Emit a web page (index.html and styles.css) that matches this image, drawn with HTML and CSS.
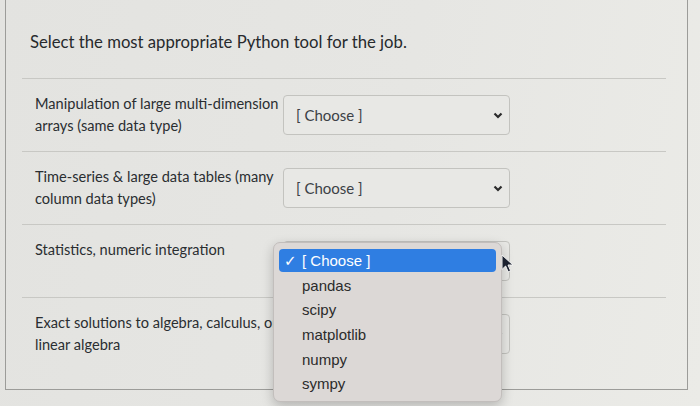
FILE: index.html
```html
<!DOCTYPE html>
<html>
<head>
    <link rel="stylesheet" href="styles.css">
</head>
<body>
<div class="quiz">
    <p class="question">Select the most appropriate Python tool for the job.</p>
    <div class="answers">
        <div class="row">
            <div class="label">Manipulation of large multi-dimension arrays (same data type)</div>
            <div class="select">
                <span>[ Choose ]</span>
                <svg class="chevron" width="10" height="7" viewBox="0 0 10 7"><path d="M1.5 1.5 L5 5 L8.5 1.5" fill="none" stroke="#2b2b2b" stroke-width="2.2"/></svg>
            </div>
        </div>
        <div class="row">
            <div class="label">Time-series &amp; large data tables (many column data types)</div>
            <div class="select">
                <span>[ Choose ]</span>
                <svg class="chevron" width="10" height="7" viewBox="0 0 10 7"><path d="M1.5 1.5 L5 5 L8.5 1.5" fill="none" stroke="#2b2b2b" stroke-width="2.2"/></svg>
            </div>
        </div>
        <div class="row">
            <div class="label">Statistics, numeric integration</div>
            <div class="select open">
                <span class="value">[ Choose ]</span>
                <svg class="chevron" width="10" height="7" viewBox="0 0 10 7"><path d="M1.5 1.5 L5 5 L8.5 1.5" fill="none" stroke="#2b2b2b" stroke-width="2.2"/></svg>
                <ul class="menu">
                    <li class="item current"><span class="check">&#10003;</span>[ Choose ]</li>
                    <li class="item">pandas</li>
                    <li class="item">scipy</li>
                    <li class="item">matplotlib</li>
                    <li class="item">numpy</li>
                    <li class="item">sympy</li>
                </ul>
            </div>
        </div>
        <div class="row">
            <div class="label">Exact solutions to algebra, calculus, or linear algebra</div>
            <div class="select under">
                <span class="value">[ Choose ]</span>
                <svg class="chevron" width="10" height="7" viewBox="0 0 10 7"><path d="M1.5 1.5 L5 5 L8.5 1.5" fill="none" stroke="#2b2b2b" stroke-width="2.2"/></svg>
            </div>
        </div>
    </div>
</div>
<!-- mouse pointer over the open select -->
<svg class="cursor" width="14" height="20" viewBox="0 0 14 20">
    <path d="M1 1 L1 15.5 L4.6 12 L7.2 17.8 L9.6 16.8 L7 11 L12 11 Z" fill="#1c2230" stroke="#f2f2f2" stroke-width="1"/>
</svg>
</body>
</html>
```

FILE: styles.css
```css
body {
    margin: 0;
    background: linear-gradient(100deg, #e3e3e0 0%, #e6e6e3 55%, #ebebe7 100%);
    font-family: Lato, "Open Sans", sans-serif;
    color: #2f3336;
    height: 406px;
    overflow: hidden;
}
.quiz {
    margin-left: 5px;
    width: 683px;
    box-sizing: border-box;
    border: 1px solid #9c9c99;
    border-top: none;
    padding-bottom: 19px;
}
.question {
    margin: 0;
    padding: 30px 0 0 24px;
    font-size: 16.7px;
    line-height: 24px;
    color: #272a2d;
}
.answers {
    margin: 24px 21px 0 16px;
}
.row {
    display: flex;
    align-items: flex-start;
    border-top: 1px solid #c8c8c4;
    padding: 16px 0 16px 13px;
}
.label {
    width: 248px;
    margin: -2px 0 -2px;
    font-size: 14.6px;
    line-height: 22px;
    color: #2a2e31;
}
.select {
    position: relative;
    width: 227px;
    height: 40px;
    box-sizing: border-box;
    border: 1px solid #c3c3bf;
    border-radius: 4px;
    background: #e8e8e5;
    display: flex;
    align-items: center;
    justify-content: space-between;
    padding: 0 6px 0 12px;
    font-size: 15px;
    color: #3c4146;
}
/* value text that sits under the open menu */
.open .value,
.under .value {
    visibility: hidden;
}
.chevron {
    display: block;
}
.menu {
    position: absolute;
    left: -11px;
    top: 0;
    width: 229px;
    box-sizing: border-box;
    margin: 0;
    padding: 6px 5px 4px;
    list-style: none;
    background: #dcd8d6;
    border: 1px solid #c2bebc;
    border-radius: 7px;
    box-shadow: 0 4px 12px rgba(0, 0, 0, 0.22);
    font-family: "Liberation Sans", Arial, sans-serif;
    font-size: 15px;
    z-index: 2;
}
.item {
    height: 24.7px;
    line-height: 24.7px;
    padding-left: 23px;
    color: #2b2b2b;
}
.item.current {
    height: 23px;
    line-height: 23px;
    margin-bottom: 1.7px;
    padding-left: 5px;
    background: #2f7ee2;
    border-radius: 4px;
    color: #ffffff;
}
.check {
    display: inline-block;
    width: 18px;
    font-family: "DejaVu Sans", sans-serif;
    font-size: 15px;
    font-weight: bold;
}
.cursor {
    position: absolute;
    left: 501px;
    top: 254px;
    z-index: 3;
}
```
